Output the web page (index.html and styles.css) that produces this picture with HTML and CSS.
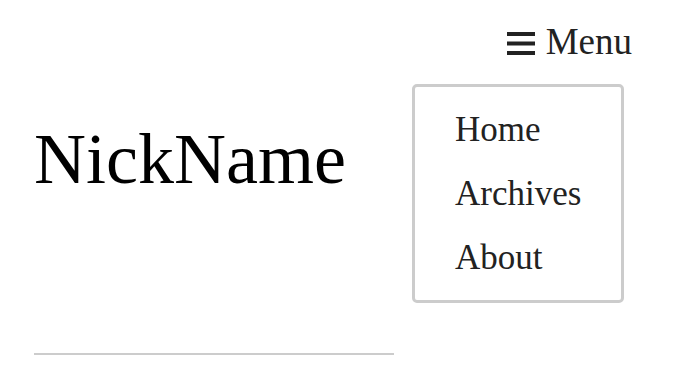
FILE: index.html
```html
<!DOCTYPE html>
<html>
<head>
<meta charset="utf-8">
<link rel="stylesheet" href="styles.css">
</head>
<body>
<header class="site-header">
  <nav class="topbar">
    <div class="menu">
      <button class="menu-toggle">
        <svg class="burger" width="28" height="23" viewBox="0 0 28 23" aria-hidden="true">
          <rect x="0" y="0" width="28" height="4" fill="#222"/>
          <rect x="0" y="9.5" width="28" height="4" fill="#222"/>
          <rect x="0" y="19" width="28" height="4" fill="#222"/>
        </svg>
        <span class="menu-label">Menu</span>
      </button>
      <ul class="dropdown">
        <li><a href="#">Home</a></li>
        <li><a href="#">Archives</a></li>
        <li><a href="#">About</a></li>
      </ul>
    </div>
  </nav>
  <h1 class="site-title">NickName</h1>
  <hr class="divider">
</header>
</body>
</html>
```
FILE: styles.css
```css
html, body {
  margin: 0;
  padding: 0;
  background: #fff;
}
body {
  font-family: "Liberation Serif", "Times New Roman", serif;
  color: #222;
  width: 680px;
  height: 384px;
  overflow: hidden;
}
.site-header {
  padding: 22px 48px 0 34px;
}
.topbar {
  display: flex;
  justify-content: flex-end;
}
.menu {
  position: relative;
}
.menu-toggle {
  display: flex;
  align-items: center;
  gap: 11px;
  background: none;
  border: 0;
  padding: 0;
  font: inherit;
  color: #222;
  font-size: 37px;
  line-height: 40px;
  height: 40px;
  cursor: pointer;
}
.burger {
  display: block;
  margin-top: 2px;
}
.menu-label {
  display: block;
}
.dropdown {
  position: absolute;
  top: 62px;
  right: 8px;
  width: 206px;
  box-sizing: content-box;
  margin: 0;
  padding: 11px 0 10px 0;
  list-style: none;
  border: 3px solid #ccc;
  border-radius: 5px;
  background: #fff;
}
.dropdown li {
  font-size: 35px;
  line-height: 64px;
  padding-left: 40px;
}
.dropdown a {
  color: #222;
  text-decoration: none;
}
.site-title {
  margin: 57px 0 0 0;
  font-size: 72px;
  line-height: 80px;
  font-weight: normal;
  color: #000;
}
.divider {
  width: 360px;
  margin: 154px 0 0 0;
  border: 0;
  height: 2px;
  background: #ccc;
}
```
